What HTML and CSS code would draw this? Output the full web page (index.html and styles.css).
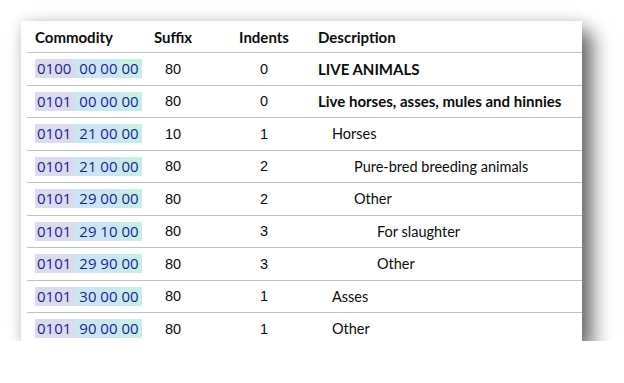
FILE: index.html
```html
<!DOCTYPE html>
<html>
<head>
<meta charset="utf-8">
<link rel="stylesheet" href="styles.css">
</head>
<body>
<div class="card">
  <div class="table">
    <div class="row head">
      <div class="c code-col">Commodity</div>
      <div class="c num">Suffix</div>
      <div class="c num ind">Indents</div>
      <div class="c desc">Description</div>
    </div>
    <div class="row">
      <div class="c code-col"><span class="code"><span class="s1">0100</span><span class="s2">00 00</span><span class="s3">00</span></span></div>
      <div class="c num">80</div>
      <div class="c num ind">0</div>
      <div class="c desc b">LIVE ANIMALS</div>
    </div>
    <div class="row">
      <div class="c code-col"><span class="code"><span class="s1">0101</span><span class="s2">00 00</span><span class="s3">00</span></span></div>
      <div class="c num">80</div>
      <div class="c num ind">0</div>
      <div class="c desc b">Live horses, asses, mules and hinnies</div>
    </div>
    <div class="row">
      <div class="c code-col"><span class="code"><span class="s1">0101</span><span class="s2">21 00</span><span class="s3">00</span></span></div>
      <div class="c num">10</div>
      <div class="c num ind">1</div>
      <div class="c desc l1">Horses</div>
    </div>
    <div class="row">
      <div class="c code-col"><span class="code"><span class="s1">0101</span><span class="s2">21 00</span><span class="s3">00</span></span></div>
      <div class="c num">80</div>
      <div class="c num ind">2</div>
      <div class="c desc l2">Pure-bred breeding animals</div>
    </div>
    <div class="row">
      <div class="c code-col"><span class="code"><span class="s1">0101</span><span class="s2">29 00</span><span class="s3">00</span></span></div>
      <div class="c num">80</div>
      <div class="c num ind">2</div>
      <div class="c desc l2">Other</div>
    </div>
    <div class="row">
      <div class="c code-col"><span class="code"><span class="s1">0101</span><span class="s2">29 10</span><span class="s3">00</span></span></div>
      <div class="c num">80</div>
      <div class="c num ind">3</div>
      <div class="c desc l3">For slaughter</div>
    </div>
    <div class="row">
      <div class="c code-col"><span class="code"><span class="s1">0101</span><span class="s2">29 90</span><span class="s3">00</span></span></div>
      <div class="c num">80</div>
      <div class="c num ind">3</div>
      <div class="c desc l3">Other</div>
    </div>
    <div class="row">
      <div class="c code-col"><span class="code"><span class="s1">0101</span><span class="s2">30 00</span><span class="s3">00</span></span></div>
      <div class="c num">80</div>
      <div class="c num ind">1</div>
      <div class="c desc l1">Asses</div>
    </div>
    <div class="row">
      <div class="c code-col"><span class="code"><span class="s1">0101</span><span class="s2">90 00</span><span class="s3">00</span></span></div>
      <div class="c num">80</div>
      <div class="c num ind">1</div>
      <div class="c desc l1">Other</div>
    </div>
  </div>
</div>
</body>
</html>
```
FILE: styles.css
```css
html, body {
  margin: 0;
  padding: 0;
  background: #ffffff;
}
body {
  padding: 21px 0 0 21px;
  font-family: Lato, "Noto Sans", sans-serif;
  color: #0b0c0c;
}
.card {
  width: 561px;
  height: 320px;
  background: #ffffff;
  overflow: hidden;
  box-shadow: 11px 11px 18px rgba(0, 0, 0, 0.55), 0 0 14px rgba(0, 0, 0, 0.14);
}
.table {
  margin-left: 6px;
  width: 555px;
}
.row {
  display: grid;
  grid-template-columns: 116px 60px 115px 1fr;
  align-items: center;
  height: 31.5px;
  border-bottom: 1px solid #bfc1c3;
}
.row.head {
  height: 31px;
}
.head .c {
  font-weight: 700;
  font-size: 15px;
}
.head .num {
  font-family: Lato, "Noto Sans", sans-serif;
}
.c {
  font-size: 14.5px;
  white-space: nowrap;
}
.code-col {
  padding-left: 8px;
}
.num {
  text-align: center;
  font-family: "Liberation Sans", Arial, sans-serif;
  font-size: 14.5px;
}
.ind {
  padding-left: 7px;
}
.desc.b {
  font-weight: 700;
  font-size: 15px;
}
.desc.l1 { padding-left: 14px; }
.desc.l2 { padding-left: 36px; }
.desc.l3 { padding-left: 59px; }
.code {
  display: inline-flex;
  height: 19px;
  align-items: center;
  font-family: "Open Sans", "Noto Sans", sans-serif;
  font-size: 15px;
  color: #1b1b9a;
  line-height: 19px;
}
.code span {
  height: 19px;
  display: inline-block;
}
.s1 {
  background: #dcdbee;
  padding: 0 4px 0 2px;
}
.s2 {
  background: #cbe6f3;
  padding: 0 2px 0 4px;
}
.s3 {
  background: #c6ede6;
  padding: 0 3px 0 2px;
}
```
